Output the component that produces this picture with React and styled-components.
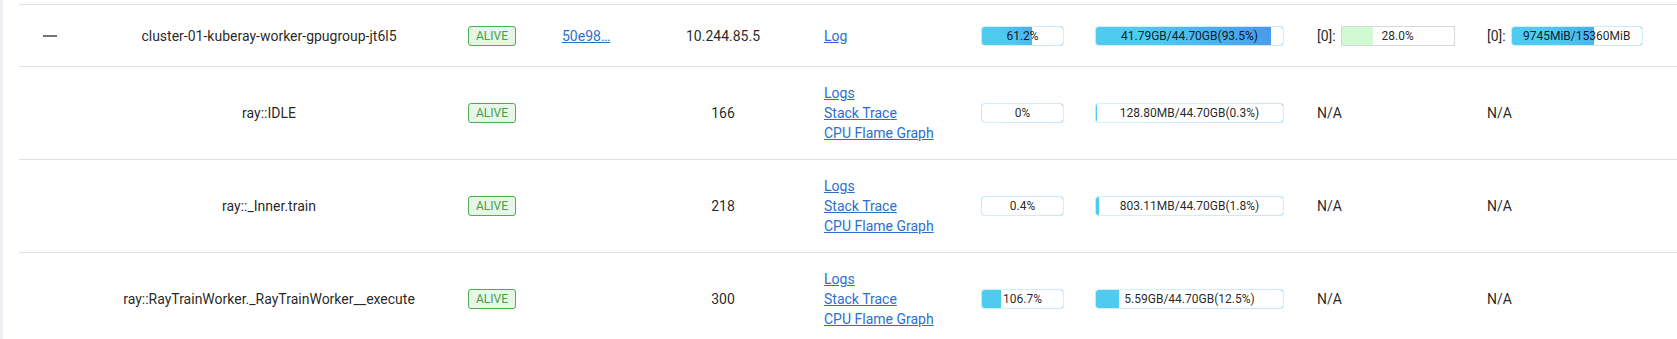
import React from "react";
import styled, { createGlobalStyle } from "styled-components";

const GlobalStyle = createGlobalStyle`
  html, body {
    margin: 0;
    padding: 0;
    background: #fff;
    font-family: Roboto, "Liberation Sans", Arial, sans-serif;
    color: rgba(0, 0, 0, 0.87);
  }
`;

const COLUMNS = "61px 378px 93px 99px 146px 177px 114px 220px 170px 1fr";

const Page = styled.div`
  display: flex;
  min-height: 339px;
`;

const Strip = styled.div`
  width: 3px;
  flex-shrink: 0;
  background: #eceff3;
`;

const Main = styled.div`
  flex: 1;
  padding: 4px 0 0 16px;
`;

const Table = styled.div`
  border-top: 1px solid #e0e0e0;
`;

const Row = styled.div`
  display: grid;
  grid-template-columns: ${COLUMNS};
  align-items: center;
  min-height: ${(p) => p.$h}px;
  border-bottom: 1px solid #e0e0e0;
  font-size: 14px;
  line-height: 20px;
`;

const Cell = styled.div`
  display: flex;
  align-items: center;
  justify-content: ${(p) => (p.$center ? "center" : "flex-start")};
  padding-left: ${(p) => (p.$center ? 0 : p.$pad ?? 10)}px;
  white-space: nowrap;
`;

const ExpandButton = styled.button`
  display: flex;
  align-items: center;
  justify-content: center;
  width: 24px;
  height: 24px;
  padding: 0;
  border: none;
  background: none;
  color: rgba(0, 0, 0, 0.54);
  cursor: pointer;
`;

const Badge = styled.span`
  display: inline-block;
  box-sizing: border-box;
  height: 20px;
  padding: 0 7px;
  border: 1px solid #4caf50;
  border-radius: 3px;
  background: #e8f5e9;
  color: #43a047;
  font-size: 12px;
  line-height: 18px;
  text-transform: uppercase;
`;

const Link = styled.a`
  color: #2b6fcf;
  text-decoration: underline;
  cursor: pointer;
`;

const LinkList = styled.div`
  display: flex;
  flex-direction: column;
  line-height: 20px;
`;

const BarBox = styled.div`
  display: grid;
  box-sizing: border-box;
  width: ${(p) => p.$w}px;
  height: 20px;
  border: 1px solid ${(p) => (p.$gpu ? "#d9d9d9" : "rgba(255,255,255,0.73)")};
  border-radius: ${(p) => (p.$gpu ? 0 : 4)}px;
  background: ${(p) =>
    p.$gpu
      ? "linear-gradient(45deg, #d2fad2 30%, #d9ebd9 90%)"
      : "linear-gradient(45deg, #4fcbf0 30%, #4a9aeb 90%)"};
  overflow: hidden;

  & > * {
    grid-area: 1 / 1;
  }
`;

const BarCover = styled.div`
  justify-self: end;
  height: 100%;
  background: #fff;
  border-radius: 0 2px 2px 0;
`;

const BarText = styled.span`
  font-size: 12px;
  line-height: 18px;
  text-align: center;
  color: rgba(0, 0, 0, 0.87);
`;

const DeviceLabel = styled.span`
  margin-right: 5px;
`;

const MinusIcon = () => (
  <svg width="24" height="24" viewBox="0 0 24 24" fill="currentColor">
    <path d="M19 13H5v-2h14v2z" />
  </svg>
);

const Bar = ({ w, pct, text, gpu }) => (
  <BarBox $w={w} $gpu={gpu}>
    <BarCover style={{ width: `${100 - pct}%` }} />
    <BarText>{text}</BarText>
  </BarBox>
);

const workers = [
  {
    name: "ray::IDLE",
    pid: "166",
    cpu: { pct: 0, text: "0%" },
    mem: { pct: 0.3, text: "128.80MB/44.70GB(0.3%)" },
  },
  {
    name: "ray::_Inner.train",
    pid: "218",
    cpu: { pct: 0.4, text: "0.4%" },
    mem: { pct: 1.8, text: "803.11MB/44.70GB(1.8%)" },
  },
  {
    name: "ray::RayTrainWorker._RayTrainWorker__execute",
    pid: "300",
    cpu: { pct: 24, text: "106.7%" },
    mem: { pct: 12.5, text: "5.59GB/44.70GB(12.5%)" },
  },
];

export default function App() {
  return (
    <>
      <GlobalStyle />
      <Page>
        <Strip />
        <Main>
          <Table>
            <Row $h={61}>
              <Cell $center>
                <ExpandButton aria-label="collapse">
                  <MinusIcon />
                </ExpandButton>
              </Cell>
              <Cell $center>cluster-01-kuberay-worker-gpugroup-jt6l5</Cell>
              <Cell>
                <Badge>Alive</Badge>
              </Cell>
              <Cell $pad={11}>
                <Link>50e98…</Link>
              </Cell>
              <Cell $center>10.244.85.5</Cell>
              <Cell $pad={28}>
                <Link>Log</Link>
              </Cell>
              <Cell $pad={8}>
                <Bar w={83} pct={61.2} text="61.2%" />
              </Cell>
              <Cell $pad={8}>
                <Bar w={189} pct={93.5} text="41.79GB/44.70GB(93.5%)" />
              </Cell>
              <Cell>
                <DeviceLabel>[0]:</DeviceLabel>
                <Bar w={114} pct={28} text="28.0%" gpu />
              </Cell>
              <Cell>
                <DeviceLabel>[0]:</DeviceLabel>
                <Bar w={132} pct={63.4} text="9745MiB/15360MiB" />
              </Cell>
            </Row>
            {workers.map((w) => (
              <Row $h={92} key={w.pid}>
                <Cell />
                <Cell $center>{w.name}</Cell>
                <Cell>
                  <Badge>Alive</Badge>
                </Cell>
                <Cell />
                <Cell $center>{w.pid}</Cell>
                <Cell $pad={28}>
                  <LinkList>
                    <Link>Logs</Link>
                    <Link>Stack Trace</Link>
                    <Link>CPU Flame Graph</Link>
                  </LinkList>
                </Cell>
                <Cell $pad={8}>
                  <Bar w={83} pct={w.cpu.pct} text={w.cpu.text} />
                </Cell>
                <Cell $pad={8}>
                  <Bar w={189} pct={w.mem.pct} text={w.mem.text} />
                </Cell>
                <Cell>N/A</Cell>
                <Cell>N/A</Cell>
              </Row>
            ))}
          </Table>
        </Main>
      </Page>
    </>
  );
}
